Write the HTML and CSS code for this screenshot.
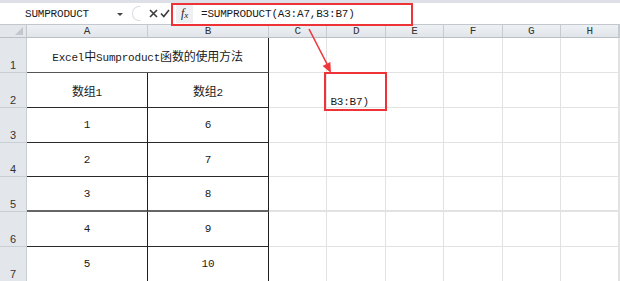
FILE: index.html
```html
<!DOCTYPE html>
<html lang="zh-CN">
<head>
    <meta charset="UTF-8" />
    <title>Excel - SUMPRODUCT</title>
    <link rel="stylesheet" href="styles.css">
</head>
<body>

<!-- Formula bar -->
<div class="ribbon-edge"></div>
<div class="formula-bar">
    <div class="name-box">SUMPRODUCT</div>
    <div class="name-drop"></div>
    <div class="fb-grip"></div>
    <div class="fb-btn">
        <svg width="9" height="9" viewBox="0 0 9 9"><path d="M1 1 L8 8 M8 1 L1 8" stroke="#3c3c3c" stroke-width="1.6"/></svg>
    </div>
    <div class="fb-btn">
        <svg width="10" height="9" viewBox="0 0 10 9"><path d="M1 4.5 L3.8 7.5 L9 1" stroke="#3c3c3c" stroke-width="1.6" fill="none"/></svg>
    </div>
    <div class="fx"><i>f</i><span>x</span></div>
    <div class="formula-input">=SUMPRODUCT(A3:A7,B3:B7)</div>
</div>

<!-- Sheet -->
<div class="sheet">
    <div class="corner"></div>
    <div class="col-head">A</div>
    <div class="col-head">B</div>
    <div class="col-head">C</div>
    <div class="col-head">D</div>
    <div class="col-head">E</div>
    <div class="col-head">F</div>
    <div class="col-head">G</div>
    <div class="col-head">H</div>
    <div class="col-head"></div>

    <div class="row-head">1</div>
    <div class="cell tb merged"><span>Excel<span class="cjk">中</span>Sumproduct<span class="cjk">函数的使用方法</span></span></div>
    <div class="cell"></div><div class="cell"></div><div class="cell"></div><div class="cell"></div><div class="cell"></div><div class="cell"></div><div class="cell"></div>

    <div class="row-head">2</div>
    <div class="cell tb"><span><span class="cjk">数组</span>1</span></div>
    <div class="cell tb"><span><span class="cjk">数组</span>2</span></div>
    <div class="cell"></div>
    <div class="cell overflow">B3:B7)</div>
    <div class="cell"></div><div class="cell"></div><div class="cell"></div><div class="cell"></div><div class="cell"></div>

    <div class="row-head">3</div>
    <div class="cell tb">1</div><div class="cell tb">6</div>
    <div class="cell"></div><div class="cell"></div><div class="cell"></div><div class="cell"></div><div class="cell"></div><div class="cell"></div><div class="cell"></div>

    <div class="row-head">4</div>
    <div class="cell tb">2</div><div class="cell tb">7</div>
    <div class="cell"></div><div class="cell"></div><div class="cell"></div><div class="cell"></div><div class="cell"></div><div class="cell"></div><div class="cell"></div>

    <div class="row-head thick">5</div>
    <div class="cell tb thick">3</div><div class="cell tb thick">8</div>
    <div class="cell thick"></div><div class="cell thick"></div><div class="cell thick"></div><div class="cell thick"></div><div class="cell thick"></div><div class="cell thick"></div><div class="cell thick"></div>

    <div class="row-head">6</div>
    <div class="cell tb">4</div><div class="cell tb">9</div>
    <div class="cell"></div><div class="cell"></div><div class="cell"></div><div class="cell"></div><div class="cell"></div><div class="cell"></div><div class="cell"></div>

    <div class="row-head">7</div>
    <div class="cell tb">5</div><div class="cell tb">10</div>
    <div class="cell"></div><div class="cell"></div><div class="cell"></div><div class="cell"></div><div class="cell"></div><div class="cell"></div><div class="cell"></div>
</div>

<!-- Annotations -->
<div class="callout formula-callout"></div>
<div class="callout cell-callout"></div>
<svg class="arrow" width="620" height="281" viewBox="0 0 620 281">
    <line x1="309" y1="29" x2="327.5" y2="65" stroke="#f0373b" stroke-width="1.6"/>
    <polygon points="331,73 322.6,65.9 330.3,62" fill="#f0373b"/>
</svg>

</body>
</html>
```

FILE: styles.css
```css
body {
    margin: 0;
    width: 620px;
    height: 281px;
    overflow: hidden;
    background: #fff;
    font-family: "Liberation Mono", "Noto Sans CJK SC", monospace;
    font-size: 11px;
    letter-spacing: -0.2px;
    color: #1a1a1a;
    position: relative;
}

.cjk {
    font-family: "Noto Sans CJK SC", sans-serif;
    font-size: 12px;
}

/* Formula bar */
.ribbon-edge {
    height: 3px;
    background: #dde1e7;
}

.formula-bar {
    height: 21px;
    display: flex;
    align-items: center;
    background: #fff;
    border-bottom: 1px solid #c3c8cf;
}

.name-box {
    width: 112px;
    box-sizing: border-box;
    padding-left: 25px;
    font-size: 11px;
}

.name-drop {
    width: 0;
    height: 0;
    border-left: 3px solid transparent;
    border-right: 3px solid transparent;
    border-top: 3px solid #444;
    margin: 1px 9px 0 5px;
}

.fb-grip {
    width: 7px;
    height: 13px;
    border: 1px solid #d8dce2;
    border-right-color: transparent;
    border-radius: 7px 0 0 7px;
    margin-right: 6px;
}

.fb-btn {
    width: 12px;
    display: flex;
    justify-content: center;
}

.fx {
    width: 17px;
    height: 19px;
    margin-left: 5px;
    background: #eef0f3;
    display: flex;
    align-items: center;
    justify-content: center;
    font-family: "Liberation Serif", serif;
    font-size: 12px;
    color: #222;
}

.fx i {
    font-style: italic;
}

.fx span {
    font-size: 9px;
    font-style: italic;
    margin-top: 3px;
}

.formula-input {
    flex: 1;
    padding-left: 8px;
}

/* Sheet grid */
.sheet {
    display: grid;
    grid-template-columns: 27px 121px 121px repeat(6, 58.4px) 1fr;
    grid-template-rows: 13px 35px 35px 35px 34px 35px 35px 35px;
}

.corner {
    background: #e3e7ec;
    border-right: 1px solid #c3c8cf;
    border-bottom: 1px solid #b9bfc7;
    position: relative;
}

.corner::after {
    content: "";
    position: absolute;
    right: 3px;
    bottom: 2px;
    border-left: 8px solid transparent;
    border-bottom: 8px solid #c2c7ce;
}

.col-head {
    background: linear-gradient(#eef1f4, #e1e5ea);
    border-right: 1px solid #c6cbd2;
    border-bottom: 1px solid #b9bfc7;
    display: flex;
    align-items: center;
    justify-content: center;
    font-size: 11px;
    color: #333;
}

.row-head {
    background: #e3e7ec;
    border-right: 1px solid #c9ced5;
    border-bottom: 1px solid #c9ced5;
    display: flex;
    align-items: flex-end;
    justify-content: center;
    padding-bottom: 1px;
    font-family: "Liberation Sans", sans-serif;
    font-size: 11px;
    letter-spacing: 0;
    color: #333;
}

.cell {
    border-right: 1px solid #e2e2e2;
    border-bottom: 1px solid #e2e2e2;
    display: flex;
    align-items: center;
    justify-content: center;
    white-space: nowrap;
}

.cell.tb {
    border-right-color: #1e1e1e;
    border-bottom-color: #2a2a2a;
}

.cell.merged {
    grid-column: span 2;
    border-bottom-color: #555;
}

.cell.thick {
    border-bottom-width: 2px;
}

.cell.tb.thick {
    border-bottom-color: #666;
}

.cell.overflow {
    justify-content: flex-start;
    align-items: flex-end;
    line-height: 10px;
    padding: 0 0 0 3px;
}

/* Red annotation boxes */
.callout {
    position: absolute;
    border: 2px solid #ee3338;
    box-sizing: border-box;
}

.formula-callout {
    left: 171px;
    top: 3px;
    width: 242px;
    height: 23px;
}

.cell-callout {
    left: 324px;
    top: 72px;
    width: 63px;
    height: 39px;
}

.arrow {
    position: absolute;
    left: 0;
    top: 0;
    pointer-events: none;
}
```
